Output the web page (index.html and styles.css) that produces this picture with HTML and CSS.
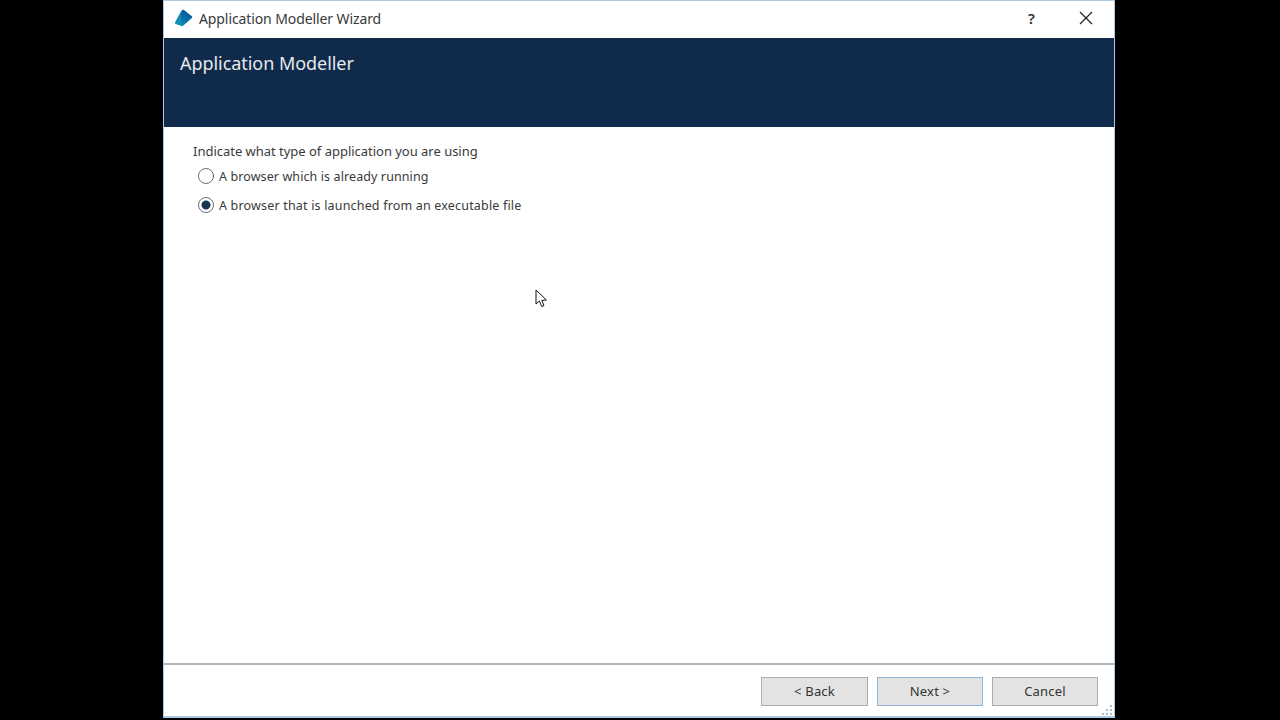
FILE: index.html
```html
<!DOCTYPE html>
<html lang="en">
<head>
<meta charset="utf-8">
<title>Application Modeller Wizard</title>
<link rel="stylesheet" href="styles.css">
</head>
<body>
<div class="window">
  <div class="titlebar">
    <svg class="logo" width="20" height="18" viewBox="0 0 20 18"><defs><linearGradient id="g" x1="0" y1="1" x2="1" y2="0"><stop offset="0" stop-color="#12a0b8"/><stop offset="0.55" stop-color="#0b6aa8"/><stop offset="1" stop-color="#0a4f8c"/></linearGradient></defs><path d="M7.6 1.4 C8.2 .7 9.2 .6 10 1.1 L17.6 7 C18.4 7.6 18.4 8.6 17.6 9.2 L9.4 16.4 C8.7 17 8 17.1 7.2 16.8 L2 15 C1.2 14.7 .9 14 1.2 13.2 Z" fill="url(#g)"/><path d="M7.6 1.4 L1.2 13.2 C.9 14 1.2 14.7 2 15 L7.2 16.8 C7.8 17 8.2 16.9 8.6 16.7 L6.6 9 Z" fill="#1590b4" opacity=".75"/></svg>
    <span class="title">Application Modeller Wizard</span>
    <span class="help">?</span>
    <svg class="close" width="14" height="14" viewBox="0 0 14 14"><path d="M1 1 L13 13 M13 1 L1 13" stroke="#222" stroke-width="1.2" fill="none"/></svg>
  </div>
  <div class="banner">Application Modeller</div>
  <div class="content">
    <p class="prompt">Indicate what type of application you are using</p>
    <div class="option first"><span class="radio"></span><span>A browser which is already running</span></div>
    <div class="option second"><span class="radio checked"></span><span>A browser that is launched from an executable file</span></div>
  </div>
  <div class="footer">
    <div class="btn back">&lt; Back</div>
    <div class="btn next">Next &gt;</div>
    <div class="btn">Cancel</div>
    <svg class="grip" width="12" height="12" viewBox="0 0 12 12"><path d="M9 1h2v2H9zM5 5h2v2H5zM9 5h2v2H9zM1 9h2v2H1zM5 9h2v2H5zM9 9h2v2H9z" fill="#b5b9bc"/></svg>
  </div>
  <svg class="cursor" width="13" height="19" viewBox="0 0 13 19"><path d="M1 1 V15 L4.4 12 L6.8 17.6 L9 16.6 L6.8 11.4 L11.4 11 Z" fill="#fff" stroke="#111" stroke-width="1"/></svg>
</div>
</body>
</html>
```
FILE: styles.css
```css
* { box-sizing: border-box; }
html, body { margin: 0; height: 100%; }
body {
  background: #000;
  height: 720px;
  overflow: hidden;
  font-family: "Noto Sans", "Open Sans", sans-serif;
  color: #333;
}
.window {
  position: relative;
  width: 952px;
  height: 718px;
  margin-left: 163px;
  background: #fff;
  border: 1px solid #a9cbe6;
  border-bottom-width: 2px;
  display: flex;
  flex-direction: column;
}
.titlebar {
  height: 36px;
  margin-top: 1px;
  padding-bottom: 4px;
  flex: none;
  display: flex;
  align-items: center;
  padding-left: 10px;
  font-size: 14px;
}
.logo { flex: none; }
.title { margin-left: 5px; color: #3a3a3a; letter-spacing: -0.1px; }
.help { margin-left: auto; font-size: 15px; font-weight: 600; color: #333; }
.close { margin-left: 44px; margin-right: 21px; }
.banner {
  height: 89px;
  flex: none;
  background: #0f2a4a;
  color: #e8e9ea;
  font-size: 18px;
  padding: 12px 0 0 16px;
  line-height: 26px;
  letter-spacing: -0.05px;
}
.content {
  flex: 1;
  padding: 14px 0 0 29px;
  font-size: 13px;
  color: #3a3a3a;
}
.prompt { margin: 0; line-height: 20px; height: 20px; letter-spacing: -0.02px; }
.option {
  display: flex;
  align-items: center;
  gap: 5px;
  height: 20px;
  padding-left: 5px;
  margin-top: 5px;
  font-size: 12.5px;
  letter-spacing: 0.15px;
}
.second { margin-top: 9px; letter-spacing: 0.18px; }
.first { letter-spacing: 0.1px; }
.radio {
  width: 16px;
  height: 16px;
  flex: none;
  border: 1px solid #6b7075;
  border-radius: 50%;
  background: #fff;
}
.checked {
  background: radial-gradient(circle, #1a3550 0 4px, #fff 5px);
}
.footer {
  height: 53px;
  flex: none;
  border-top: 2px solid #b4b4b4;
  display: flex;
  justify-content: flex-end;
  align-items: flex-start;
  gap: 9px;
  padding: 12px 16px 0 0;
  position: relative;
}
.btn {
  width: 106px;
  height: 29px;
  background: #e3e3e3;
  border: 1px solid #adadad;
  font-size: 13px;
  line-height: 27px;
  text-align: center;
  color: #333;
  letter-spacing: 0.2px;
}
.back { width: 107px; }
.next { border-color: #8fb4d6; }
.grip { position: absolute; right: 1px; bottom: 0; }
.cursor { position: absolute; left: 371px; top: 288px; }
```
